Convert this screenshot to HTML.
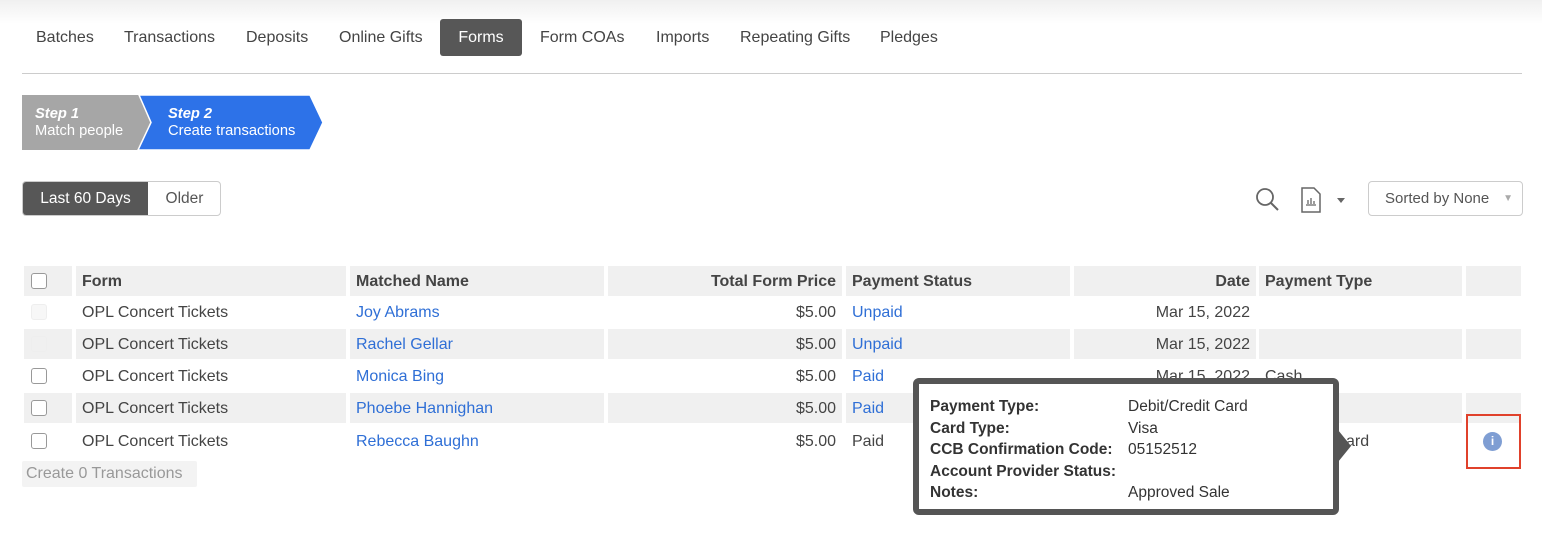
<!DOCTYPE html>
<html><head><style>
*{margin:0;padding:0;box-sizing:border-box}
body{width:1542px;height:538px;background:#fff;font-family:"Liberation Sans",Arial,sans-serif;font-size:16px;color:#444;position:relative;overflow:hidden}
.a{position:absolute;white-space:nowrap}
.top{position:absolute;left:0;top:0;width:1542px;height:24px;background:linear-gradient(#f0f0f0,#fff)}
.nav{top:29px;font-size:16px;color:#444}
.cell{position:absolute;height:30px;line-height:32px;padding:0 6px;white-space:nowrap}
.g{background:#f0f0f0}
.cb{position:absolute;width:16px;height:16px;border:1.5px solid #999;border-radius:3px;background:#fff}
.cbd{border-color:#eee;background:#f7f7f7}
.lnk{color:#2f6fd6}
.b{font-weight:bold}
</style></head><body>
<div class="top"></div>
<div class="a nav" style="left:36px">Batches</div>
<div class="a nav" style="left:124px">Transactions</div>
<div class="a nav" style="left:246px">Deposits</div>
<div class="a nav" style="left:339px">Online Gifts</div>
<div class="a" style="left:440px;top:19px;width:82px;height:37px;background:#575757;border-radius:3px;color:#fff;text-align:center;line-height:38px">Forms</div>
<div class="a nav" style="left:540px">Form COAs</div>
<div class="a nav" style="left:656px">Imports</div>
<div class="a nav" style="left:740px">Repeating Gifts</div>
<div class="a nav" style="left:880px">Pledges</div>
<div class="a" style="left:22px;top:73px;width:1500px;height:1px;background:#ccc"></div>
<svg class="a" style="left:22px;top:95px" width="302" height="56"><polygon points="0,0 117,0 130,27.5 117,55 0,55" fill="#a6a6a6"/><polygon points="117,0 288,0 301,27.5 288,55 116,55 129,27.5" fill="#2d72e8" stroke="#fff" stroke-width="1.5"/></svg>
<div class="a" style="left:35px;top:106px;color:#fff;font-size:14.7px;line-height:17px"><i class="b">Step 1</i><br>Match people</div>
<div class="a" style="left:168px;top:106px;color:#fff;font-size:14.7px;line-height:17px"><i class="b">Step 2</i><br>Create transactions</div>
<div class="a" style="left:22px;top:181px;width:199px;height:35px;border:1px solid #ccc;border-radius:4px;overflow:hidden">
<div style="position:absolute;left:0;top:0;width:125px;height:35px;background:#575757;color:#fff;line-height:33px;text-align:center;font-size:15.5px">Last 60 Days</div>
<div style="position:absolute;left:125px;top:0;width:73px;line-height:33px;text-align:center;font-size:15.5px;color:#555">Older</div></div>
<svg class="a" style="left:1255px;top:187px" width="26" height="26"><circle cx="10" cy="10" r="8" fill="none" stroke="#666" stroke-width="1.8"/><line x1="16" y1="16" x2="23" y2="23" stroke="#666" stroke-width="2"/></svg>
<svg class="a" style="left:1300px;top:186px" width="50" height="28"><path d="M2 2h12l6 6v18H2z" fill="none" stroke="#666" stroke-width="1.5"/><path d="M6 19h10M8 18v-4M11 18v-6M14 18v-3" stroke="#666" stroke-width="1.3"/><polygon points="37,12 45,12 41,17" fill="#666"/></svg>
<div class="a" style="left:1368px;top:181px;width:155px;height:35px;border:1px solid #ccc;border-radius:4px;line-height:34px;padding-left:16px;color:#555;font-size:15px">Sorted by None<span style="position:absolute;right:9px;color:#aaa;font-size:10px">▼</span></div>

<div class="cell g" style="left:24px;top:266px;width:48px"></div>
<div class="cb" style="left:31px;top:273px"></div>
<div class="cell g b" style="left:76px;top:266px;width:270px">Form</div>
<div class="cell g b" style="left:350px;top:266px;width:254px">Matched Name</div>
<div class="cell g b" style="left:608px;top:266px;width:234px;text-align:right">Total Form Price</div>
<div class="cell g b" style="left:846px;top:266px;width:224px">Payment Status</div>
<div class="cell g b" style="left:1074px;top:266px;width:182px;text-align:right">Date</div>
<div class="cell g b" style="left:1259px;top:266px;width:203px">Payment Type</div>
<div class="cell g" style="left:1466px;top:266px;width:55px"></div>

<div class="cb cbd" style="left:31px;top:304px"></div>
<div class="cell" style="left:76px;top:297px">OPL Concert Tickets</div>
<div class="cell lnk" style="left:350px;top:297px">Joy Abrams</div>
<div class="cell" style="left:608px;top:297px;width:234px;text-align:right">$5.00</div>
<div class="cell lnk" style="left:846px;top:297px">Unpaid</div>
<div class="cell" style="left:1074px;top:297px;width:182px;text-align:right">Mar 15, 2022</div>

<div class="cell g" style="left:24px;top:329px;width:48px"></div>
<div class="cb cbd" style="left:31px;top:336px;background:#f0f0f0"></div>
<div class="cell g" style="left:76px;top:329px;width:270px">OPL Concert Tickets</div>
<div class="cell g lnk" style="left:350px;top:329px;width:254px">Rachel Gellar</div>
<div class="cell g" style="left:608px;top:329px;width:234px;text-align:right">$5.00</div>
<div class="cell g lnk" style="left:846px;top:329px;width:224px">Unpaid</div>
<div class="cell g" style="left:1074px;top:329px;width:182px;text-align:right">Mar 15, 2022</div>
<div class="cell g" style="left:1259px;top:329px;width:203px"></div>
<div class="cell g" style="left:1466px;top:329px;width:55px"></div>

<div class="cb" style="left:31px;top:368px"></div>
<div class="cell" style="left:76px;top:361px">OPL Concert Tickets</div>
<div class="cell lnk" style="left:350px;top:361px">Monica Bing</div>
<div class="cell" style="left:608px;top:361px;width:234px;text-align:right">$5.00</div>
<div class="cell lnk" style="left:846px;top:361px">Paid</div>
<div class="cell" style="left:1074px;top:361px;width:182px;text-align:right">Mar 15, 2022</div>
<div class="cell" style="left:1259px;top:361px">Cash</div>

<div class="cell g" style="left:24px;top:393px;width:48px"></div>
<div class="cb" style="left:31px;top:400px"></div>
<div class="cell g" style="left:76px;top:393px;width:270px">OPL Concert Tickets</div>
<div class="cell g lnk" style="left:350px;top:393px;width:254px">Phoebe Hannighan</div>
<div class="cell g" style="left:608px;top:393px;width:234px;text-align:right">$5.00</div>
<div class="cell g lnk" style="left:846px;top:393px;width:224px">Paid</div>
<div class="cell g" style="left:1074px;top:393px;width:182px"></div>
<div class="cell g" style="left:1259px;top:393px;width:203px"></div>
<div class="cell g" style="left:1466px;top:393px;width:55px"></div>

<div class="cb" style="left:31px;top:433px"></div>
<div class="cell" style="left:76px;top:426px">OPL Concert Tickets</div>
<div class="cell lnk" style="left:350px;top:426px">Rebecca Baughn</div>
<div class="cell" style="left:608px;top:426px;width:234px;text-align:right">$5.00</div>
<div class="cell" style="left:846px;top:426px">Paid</div>
<div class="cell" style="left:1340px;top:426px">ard</div>
<div class="a" style="left:1466px;top:414px;width:55px;height:55px;border:2px solid #e0412b"></div>
<div class="a" style="left:1483px;top:432px;width:19px;height:19px;border-radius:50%;background:#7f9ed3;color:#fff;font-size:12px;font-weight:bold;text-align:center;line-height:19px">i</div>
<div class="a" style="left:22px;top:461px;width:175px;height:26px;background:#f3f3f3;border-radius:2px;line-height:26px;padding-left:4px;color:#999">Create 0 Transactions</div>

<div class="a" style="left:913px;top:378px;width:426px;height:137px;border:6px solid #555;border-radius:6px;background:#fff;font-size:15.5px;color:#333;line-height:21.5px;padding:12px 0 0 11px">
<div class="b">Payment Type:</div><div class="b">Card Type:</div><div class="b">CCB Confirmation Code:</div><div class="b">Account Provider Status:</div><div class="b">Notes:</div>
<div style="position:absolute;left:209px;top:12px">Debit/Credit Card<br>Visa<br>05152512<br><br>Approved Sale</div>
</div>
<svg class="a" style="left:1338px;top:430px" width="16" height="32"><polygon points="0,0 13,16 0,32" fill="#555"/></svg>
</body></html>
